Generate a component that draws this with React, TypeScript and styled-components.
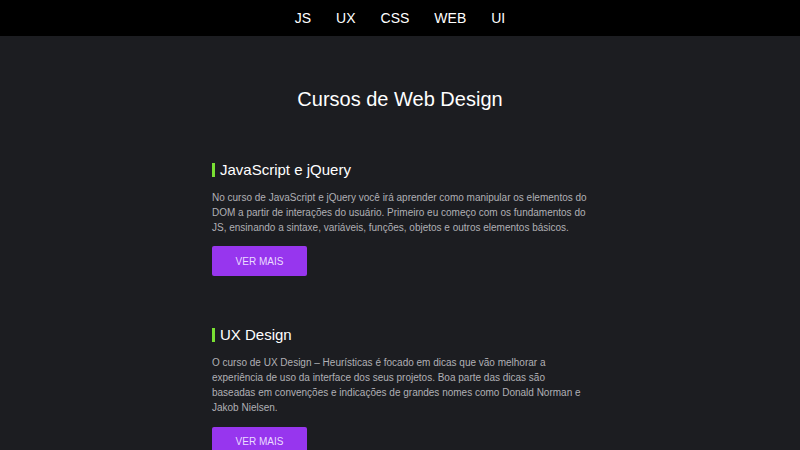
import React from "react";
import styled, { createGlobalStyle } from "styled-components";

const GlobalStyle = createGlobalStyle`
  * { box-sizing: border-box; }
  body {
    margin: 0;
    background-color: #1c1d21;
    font-family: "Liberation Sans", Arial, sans-serif;
  }
`;

const courses = [
  {
    title: "JavaScript e jQuery",
    text: "No curso de JavaScript e jQuery você irá aprender como manipular os elementos do DOM a partir de interações do usuário. Primeiro eu começo com os fundamentos do JS, ensinando a sintaxe, variáveis, funções, objetos e outros elementos básicos.",
  },
  {
    title: "UX Design",
    text: "O curso de UX Design – Heurísticas é focado em dicas que vão melhorar a experiência de uso da interface dos seus projetos. Boa parte das dicas são baseadas em convenções e indicações de grandes nomes como Donald Norman e Jakob Nielsen.",
  },
];

export default function App() {
  return (
    <>
      <GlobalStyle />
      <Header>
        <Nav>
          {["JS", "UX", "CSS", "WEB", "UI"].map((item) => (
            <NavLink key={item} href="#">
              {item}
            </NavLink>
          ))}
        </Nav>
      </Header>
      <Main>
        <Title>Cursos de Web Design</Title>
        {courses.map((course) => (
          <Course key={course.title}>
            <CourseTitle>{course.title}</CourseTitle>
            <CourseText>{course.text}</CourseText>
            <Button href="#">VER MAIS</Button>
          </Course>
        ))}
      </Main>
    </>
  );
}

const Header = styled.header`
  background-color: #000;
  height: 36px;
  display: flex;
  align-items: center;
  justify-content: center;
`;

const Nav = styled.nav`
  display: flex;
`;

const NavLink = styled.a`
  color: #fff;
  text-decoration: none;
  font-size: 14px;
  padding: 0 12.5px;
`;

const Main = styled.main`
  width: 376px;
  margin: 0 auto;
  padding: 51.5px 0 40px;
  display: flex;
  flex-direction: column;
  gap: 52px;
`;

const Title = styled.h1`
  margin: 0;
  color: #fff;
  font-size: 20px;
  font-weight: 400;
  line-height: 23px;
  text-align: center;
`;

const Course = styled.section`
  display: flex;
  flex-direction: column;
  align-items: flex-start;
`;

const CourseTitle = styled.h2`
  margin: 0 0 13px;
  color: #fff;
  font-size: 15px;
  font-weight: 400;
  line-height: 14px;
  border-left: 3px solid #79e033;
  padding-left: 5px;
`;

const CourseText = styled.p`
  margin: 0 0 11.5px;
  color: #b0b0b5;
  font-size: 10px;
  line-height: 15px;
`;

const Button = styled.a`
  display: inline-flex;
  align-items: center;
  justify-content: center;
  width: 95px;
  height: 30px;
  background-color: #9736ee;
  color: #eadcff;
  font-size: 10px;
  text-decoration: none;
  border-radius: 2px;
`;
